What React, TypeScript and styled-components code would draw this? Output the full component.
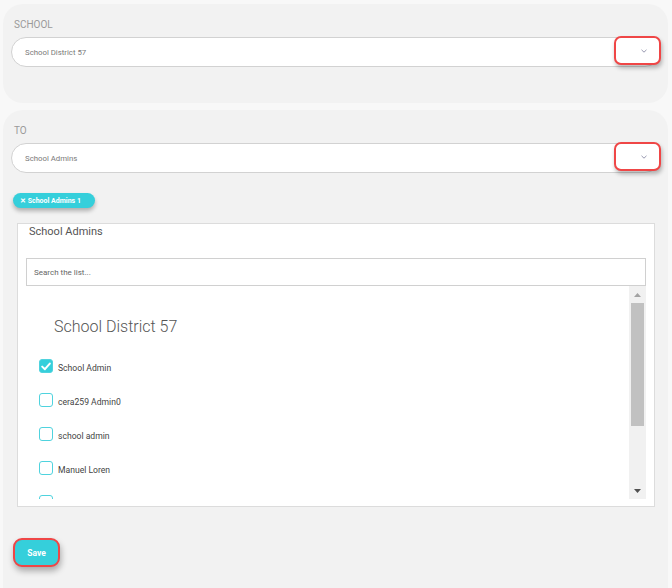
import React from "react";
import styled, { createGlobalStyle } from "styled-components";

const Global = createGlobalStyle`
  html, body { margin: 0; padding: 0; overflow: hidden; background: #f8f8f8; }
  body { font-family: Roboto, "Liberation Sans", Arial, sans-serif; }
  * { box-sizing: border-box; }
`;

const Page = styled.div`
  display: flex;
  flex-direction: column;
  gap: 7px;
  padding: 4px 4px 0 3px;
  width: 672px;
`;

const Panel = styled.section<{ $pb: number }>`
  background: #f2f2f2;
  border-radius: 20px;
  padding: 15px 8px ${(p) => p.$pb}px 8px;
  display: flex;
  flex-direction: column;
`;

const Label = styled.div`
  font-size: 10px;
  line-height: 12px;
  color: #9a9a9a;
  text-transform: uppercase;
  margin-bottom: 6px;
  padding-left: 3px;
`;

const SelectBox = styled.div`
  position: relative;
  height: 30px;
  background: #fff;
  border: 1px solid #d2d2d2;
  border-radius: 15px;
  display: flex;
  align-items: center;
  padding-left: 13px;
  font-size: 7.8px;
  color: #7a7a7a;
`;

const Toggle = styled.button`
  position: absolute;
  top: -2px;
  right: -2px;
  width: 47px;
  height: 29px;
  background: #fff;
  border: 2px solid #ef4646;
  border-radius: 7px;
  box-shadow: 1px 3px 4px rgba(0, 0, 0, 0.28);
  display: flex;
  align-items: center;
  justify-content: flex-end;
  padding: 0 12px 0 0;
  cursor: pointer;
`;

const Chip = styled.div`
  margin: 20px 0 0 2px;
  width: 82px;
  height: 15px;
  border-radius: 8px;
  background: #35cfdb;
  color: #fff;
  font-size: 7px;
  font-weight: 700;
  display: flex;
  align-items: center;
  padding-left: 7px;
  box-shadow: 0 3px 4px rgba(0, 0, 0, 0.28);
  white-space: nowrap;
`;

const ListBox = styled.div`
  margin: 15px 5px 0 6px;
  background: #fff;
  border: 1px solid #dcdcdc;
  padding: 1px 8px 7px 8px;
  display: flex;
  flex-direction: column;
`;

const ListTitle = styled.div`
  font-size: 11px;
  line-height: 14px;
  color: #555;
  padding-left: 3px;
  margin-bottom: 19px;
`;

const Search = styled.input`
  height: 28px;
  border: 1px solid #d0d0d0;
  padding: 0 7px;
  font-family: inherit;
  font-size: 8px;
  color: #555;
  outline: none;
  &::placeholder { color: #666; }
`;

const ScrollArea = styled.div`
  height: 213px;
  display: flex;
`;

const ScrollContent = styled.div`
  flex: 1;
  overflow: hidden;
  padding-top: 31px;
`;

const Heading = styled.div`
  font-size: 16px;
  line-height: 20px;
  font-weight: 300;
  color: #555;
  margin: 0 0 12px 28px;
`;

const Row = styled.label`
  height: 34px;
  display: flex;
  align-items: center;
  padding-left: 13px;
  font-size: 8.6px;
  color: #444;
`;

const RowText = styled.span`
  padding-top: 4px;
`;

const Box = styled.span<{ $checked?: boolean }>`
  width: 14px;
  height: 14px;
  border-radius: 3px;
  border: 1.5px solid #4fd3de;
  background: ${(p) => (p.$checked ? "#35cfdb" : "#fff")};
  display: flex;
  align-items: center;
  justify-content: center;
  margin-right: 5px;
  flex-shrink: 0;
`;

const Scrollbar = styled.div`
  width: 17px;
  background: #f1f1f1;
  display: flex;
  flex-direction: column;
`;

const Arrow = styled.div`
  height: 17px;
  display: flex;
  align-items: center;
  justify-content: center;
`;

const Track = styled.div`
  flex: 1;
  padding: 0 2px;
`;

const Thumb = styled.div`
  height: 123px;
  background: #c1c1c1;
`;

const SaveButton = styled.button`
  margin: 31px 0 0 2px;
  width: 47px;
  height: 29px;
  border: 2px solid #ef4646;
  border-radius: 9px;
  background: #35cfdb;
  color: #fff;
  font-family: inherit;
  font-size: 8.5px;
  font-weight: 700;
  box-shadow: 1px 4px 6px rgba(0, 0, 0, 0.3);
  cursor: pointer;
  padding: 0;
`;

const Chevron = () => (
  <svg width="6" height="4" viewBox="0 0 6 4">
    <polyline points="0.5,0.8 3,3.2 5.5,0.8" fill="none" stroke="#8b8ca6" strokeWidth="0.9" />
  </svg>
);

const Check = () => (
  <svg width="10" height="9" viewBox="0 0 10 9">
    <polyline points="1.2,4.6 3.9,7.2 8.8,1.6" fill="none" stroke="#fff" strokeWidth="2" strokeLinecap="round" strokeLinejoin="round" />
  </svg>
);

const Select = ({ value }: { value: string }) => (
  <SelectBox>
    {value}
    <Toggle aria-label="open">
      <Chevron />
    </Toggle>
  </SelectBox>
);

const people = [
  { name: "School Admin", checked: true },
  { name: "cera259 Admin0" },
  { name: "school admin" },
  { name: "Manuel Loren" },
  { name: "" },
];

export default function App() {
  return (
    <>
      <Global />
      <Page>
        <Panel $pb={36}>
          <Label>School</Label>
          <Select value="School District 57" />
        </Panel>
        <Panel $pb={40}>
          <Label>To</Label>
          <Select value="School Admins" />
          <Chip>✕ School Admins 1</Chip>
          <ListBox>
            <ListTitle>School Admins</ListTitle>
            <Search placeholder="Search the list..." />
            <ScrollArea>
              <ScrollContent>
                <Heading>School District 57</Heading>
                {people.map((p, i) => (
                  <Row key={i}>
                    <Box $checked={p.checked}>{p.checked && <Check />}</Box>
                    <RowText>{p.name}</RowText>
                  </Row>
                ))}
              </ScrollContent>
              <Scrollbar>
                <Arrow>
                  <svg width="7" height="4" viewBox="0 0 7 4">
                    <polygon points="0,4 3.5,0 7,4" fill="#a3a3a3" />
                  </svg>
                </Arrow>
                <Track>
                  <Thumb />
                </Track>
                <Arrow>
                  <svg width="7" height="4" viewBox="0 0 7 4">
                    <polygon points="0,0 7,0 3.5,4" fill="#505050" />
                  </svg>
                </Arrow>
              </Scrollbar>
            </ScrollArea>
          </ListBox>
          <SaveButton>Save</SaveButton>
        </Panel>
      </Page>
    </>
  );
}
